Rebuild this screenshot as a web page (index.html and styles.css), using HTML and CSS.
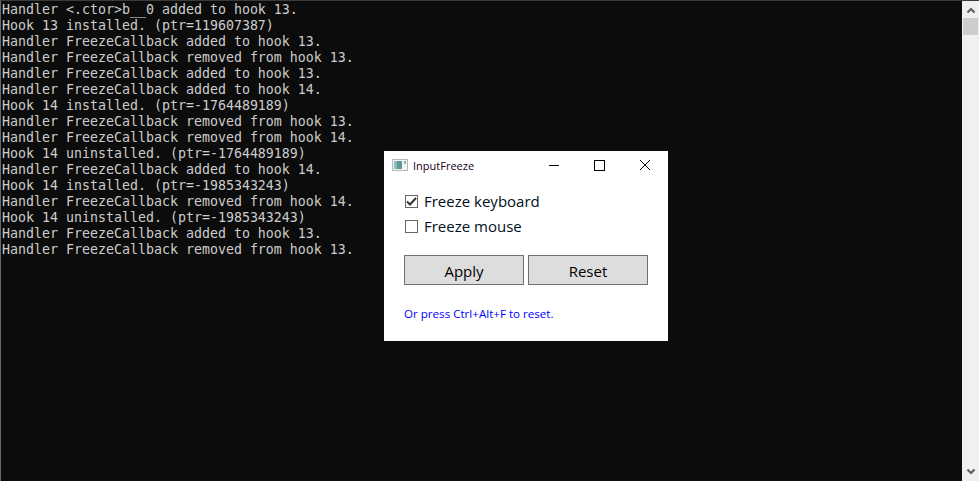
FILE: index.html
```html
<!DOCTYPE html>
<html lang="en">
<head>
<meta charset="utf-8">
<title>InputFreeze</title>
<link rel="stylesheet" href="styles.css">
</head>
<body>
<main class="console">
  <pre class="log">Handler &lt;.ctor&gt;b__0 added to hook 13.
Hook 13 installed. (ptr=119607387)
Handler FreezeCallback added to hook 13.
Handler FreezeCallback removed from hook 13.
Handler FreezeCallback added to hook 13.
Handler FreezeCallback added to hook 14.
Hook 14 installed. (ptr=-1764489189)
Handler FreezeCallback removed from hook 13.
Handler FreezeCallback removed from hook 14.
Hook 14 uninstalled. (ptr=-1764489189)
Handler FreezeCallback added to hook 14.
Hook 14 installed. (ptr=-1985343243)
Handler FreezeCallback removed from hook 14.
Hook 14 uninstalled. (ptr=-1985343243)
Handler FreezeCallback added to hook 13.
Handler FreezeCallback removed from hook 13.</pre>
  <div class="scrollbar">
    <svg class="arrow" width="16" height="17" viewBox="0 0 16 17"><path d="M4.5 11.5 8 8 11.5 11.5" fill="none" stroke="#606060" stroke-width="2.2"/></svg>
    <div class="thumb"></div>
    <div class="track"></div>
    <svg class="arrow" width="16" height="17" viewBox="0 0 16 17"><path d="M4.5 5.5 8 9 11.5 5.5" fill="none" stroke="#606060" stroke-width="2.2"/></svg>
  </div>
</main>
<section class="window">
  <header class="titlebar">
    <svg class="appicon" width="16" height="14" viewBox="0 0 16 14">
      <rect x="0.5" y="1.5" width="15" height="11" fill="#f2f4f4" stroke="#b4b8b8"/>
      <rect x="2" y="3" width="8" height="8" fill="#5f9c8f"/>
      <rect x="2" y="3" width="3" height="8" fill="#8fb8c8"/>
      <rect x="12" y="3" width="2" height="3" fill="#9fb0b0"/>
    </svg>
    <span class="title">InputFreeze</span>
    <div class="controls">
      <svg class="ctl" width="46" height="28" viewBox="0 0 46 28"><path d="M19 14.5H29" stroke="#000" fill="none"/></svg>
      <svg class="ctl" width="46" height="28" viewBox="0 0 46 28"><rect x="18.5" y="9.5" width="10" height="10" stroke="#000" fill="none"/></svg>
      <svg class="ctl" width="46" height="28" viewBox="0 0 46 28"><path d="M18 9 28 19M28 9 18 19" stroke="#000" fill="none"/></svg>
    </div>
  </header>
  <div class="content">
    <label class="check"><span class="box"><svg width="11" height="11" viewBox="0 0 11 11"><path d="M1 5.5 4 8.5 10 2" fill="none" stroke="#333" stroke-width="2"/></svg></span><span class="label">Freeze keyboard</span></label>
    <label class="check"><span class="box"></span><span class="label">Freeze mouse</span></label>
    <div class="buttons">
      <button class="btn">Apply</button>
      <button class="btn">Reset</button>
    </div>
    <p class="hint">Or press Ctrl+Alt+F to reset.</p>
  </div>
</section>
</body>
</html>
```
FILE: styles.css
```css
* { box-sizing: border-box; }
html, body { height: 100%; }
body {
  margin: 0;
  background: #0c0c0c;
  overflow: hidden;
  position: relative;
}
.console {
  display: flex;
  height: 481px;
  border-top: 1px solid #3a3a3a;
  border-left: 1px solid #6a6a6a;
  background: #0c0c0c;
}
.log {
  flex: 1;
  margin: 0;
  padding: 1px 0 0 1px;
  font: 13.29px/16px "DejaVu Sans Mono", monospace;
  color: #cccccc;
}
.scrollbar {
  width: 17px;
  background: #f0f0f0;
  display: flex;
  flex-direction: column;
  border-left: 1px solid #f0f0f0;
}
.arrow { display: block; flex: none; }
.thumb { height: 17px; width: 15px; background: #cdcdcd; flex: none; }
.track { flex: 1; }
.window {
  position: absolute;
  left: 384px;
  top: 151px;
  width: 284px;
  height: 190px;
  background: #fff;
  font-family: "Open Sans", sans-serif;
  color: #000;
}
.titlebar {
  display: flex;
  align-items: center;
  height: 28px;
  padding-left: 8px;
}
.appicon { flex: none; }
.title { margin-left: 5px; font-size: 11px; color: #200020; }
.controls { margin-left: auto; display: flex; }
.ctl { display: block; }
.content { padding: 10px 20px 0; }
.check {
  display: flex;
  align-items: center;
  height: 25px;
  font-size: 15px;
  color: #001020;
}
.label { padding-bottom: 2px; }
.box {
  width: 13px;
  height: 13px;
  border: 1px solid #666;
  margin: 0 6px 0 1px;
  display: flex;
  align-items: center;
  justify-content: center;
  background: #fff;
}
.buttons { display: flex; gap: 4px; margin-top: 16px; }
.btn {
  width: 120px;
  height: 30px;
  padding: 2px 0 0;
  background: #dddddd;
  border: 1px solid #707070;
  font: 15px "Open Sans", sans-serif;
  color: #000;
}
.hint { margin: 21px 0 0; font-size: 11.6px; color: #0000ff; }
```
